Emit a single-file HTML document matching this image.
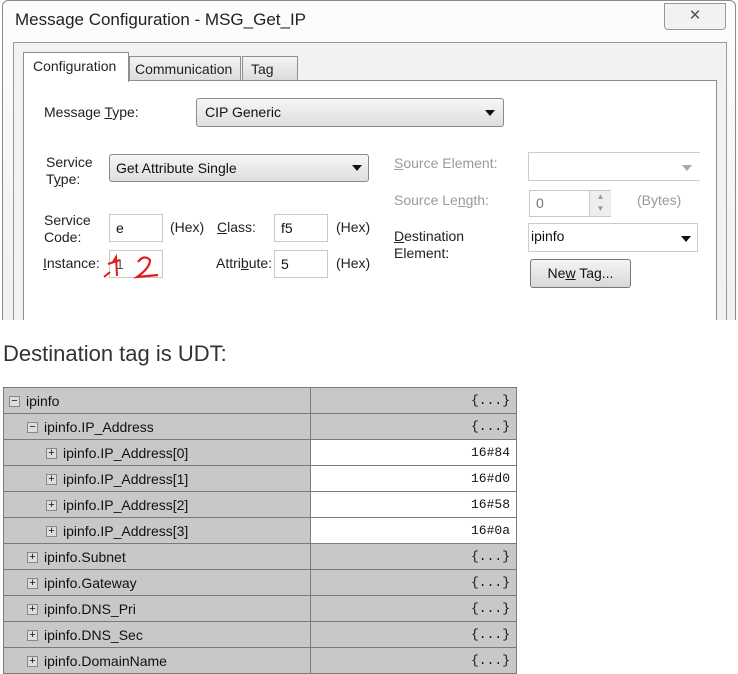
<!DOCTYPE html>
<html><head><style>
body{margin:0;width:738px;height:660px;background:#fff;position:relative;overflow:hidden;font-family:"Liberation Sans",sans-serif;}
.a{position:absolute;}
.t{position:absolute;font-size:14px;color:#222;white-space:nowrap;}
.g{color:#9a9a9a;}
.box{position:absolute;background:#fff;border:1px solid #c8c8c8;box-sizing:border-box;font-size:14px;padding-left:6px;color:#111;}
.combo{position:absolute;border:1px solid #8a8a8a;border-radius:3px;box-sizing:border-box;background:linear-gradient(#f6f6f6,#dedede);font-size:14px;padding-left:8px;color:#111;}
.arr{position:absolute;width:0;height:0;border-left:5px solid transparent;border-right:5px solid transparent;border-top:6px solid #111;}
u{text-decoration:underline;}
table{position:absolute;left:3px;top:387px;border-collapse:collapse;font-size:14px;color:#111;}
td{height:25px;border:1px solid #7a7a7a;background:#c8c8c8;padding:0;}
td.n{width:306px;}
td.v{width:206px;text-align:right;font-family:"Liberation Mono",monospace;font-size:13px;padding-right:6px;box-sizing:border-box;}
td.w{background:#fff;}
.pm{display:inline-block;width:9px;height:9px;border:1px solid #888;font-size:11px;line-height:8px;text-align:center;vertical-align:middle;margin-right:6px;background:#ddd;}
</style></head><body>
<!-- window frame -->
<div class="a" style="left:2px;top:0;width:734px;height:320px;border:1px solid #8a8a8a;border-bottom:none;border-radius:6px 6px 0 0;background:linear-gradient(#fdfdfd,#eef0f2);box-sizing:border-box;"></div>
<div class="t" style="left:15px;top:10px;font-size:17px;color:#222;">Message Configuration - MSG_Get_IP</div>
<div class="a" style="left:664px;top:3px;width:60px;height:25px;border:1px solid #999;border-radius:0 0 4px 4px;background:#f2f2f2;text-align:center;font-size:15px;color:#555;line-height:24px;">✕</div>
<div class="a" style="left:13px;top:42px;width:714px;height:278px;border:1px solid #9a9a9a;border-bottom:none;background:#f2f2f2;box-sizing:border-box;"></div>
<!-- tab panel -->
<div class="a" style="left:23px;top:80px;width:694px;height:240px;border:1px solid #8e8e8e;border-bottom:none;background:#fff;box-sizing:border-box;"></div>
<div class="a" style="left:129px;top:56px;width:112px;height:25px;border:1px solid #8e8e8e;background:linear-gradient(#f4f4f4,#dcdcdc);box-sizing:border-box;"></div>
<div class="a" style="left:242px;top:56px;width:56px;height:25px;border:1px solid #8e8e8e;background:linear-gradient(#f4f4f4,#dcdcdc);box-sizing:border-box;"></div>
<div class="a" style="left:23px;top:52px;width:106px;height:30px;border:1px solid #8e8e8e;border-bottom:none;background:#fff;box-sizing:border-box;"></div>
<div class="t" style="left:33px;top:58px;">Configuration</div>
<div class="t" style="left:135px;top:61px;">Communication</div>
<div class="t" style="left:251px;top:61px;">Tag</div>

<div class="t" style="left:44px;top:104px;">Message <u>T</u>ype:</div>
<div class="combo" style="left:196px;top:98px;width:308px;height:29px;line-height:27px;">CIP Generic<div class="arr" style="right:8px;top:11px;"></div></div>

<div class="t" style="left:46px;top:154px;line-height:17px;">Service<br>T<u>y</u>pe:</div>
<div class="combo" style="left:109px;top:154px;width:260px;height:28px;line-height:26px;padding-left:6px;">Get Attribute Single<div class="arr" style="right:6px;top:10px;"></div></div>

<div class="t" style="left:44px;top:212px;line-height:17px;">Service<br>Code:</div>
<div class="box" style="left:109px;top:214px;width:54px;height:28px;line-height:26px;">e</div>
<div class="t" style="left:170px;top:219px;">(Hex)</div>
<div class="t" style="left:217px;top:219px;"><u>C</u>lass:</div>
<div class="box" style="left:274px;top:214px;width:54px;height:28px;line-height:26px;">f5</div>
<div class="t" style="left:336px;top:219px;">(Hex)</div>

<div class="t" style="left:43px;top:255px;"><u>I</u>nstance:</div>
<div class="box" style="left:109px;top:250px;width:54px;height:28px;line-height:26px;color:#555;">1</div>
<svg class="a" style="left:100px;top:250px;" width="65" height="32"><path d="M4 27 L10 22 M13 12 L16 7 L17 26 M8 14 L20 10" stroke="#e31b1b" stroke-width="2" fill="none"/><path d="M38 12 Q44 4 50 10 Q50 18 37 27 L58 25" stroke="#e31b1b" stroke-width="2.2" fill="none"/></svg>
<div class="t" style="left:216px;top:255px;">Attri<u>b</u>ute:</div>
<div class="box" style="left:274px;top:250px;width:54px;height:28px;line-height:26px;">5</div>
<div class="t" style="left:336px;top:255px;">(Hex)</div>

<div class="t g" style="left:394px;top:155px;"><u>S</u>ource Element:</div>
<div class="a" style="left:528px;top:152px;width:172px;height:29px;border:1px solid #ccc;border-right:none;background:#fff;box-sizing:border-box;"><div class="arr" style="right:8px;top:12px;border-top-color:#aaa;"></div></div>
<div class="t g" style="left:394px;top:192px;">Source Le<u>n</u>gth:</div>
<div class="box" style="left:529px;top:190px;width:82px;height:27px;line-height:25px;color:#777;">0</div>
<div class="a" style="left:589px;top:191px;width:21px;height:25px;background:#eee;border-left:1px solid #ccc;font-size:8px;color:#999;text-align:center;line-height:12px;">▲<br>▼</div>
<div class="t g" style="left:637px;top:192px;">(Bytes)</div>

<div class="t" style="left:394px;top:228px;line-height:17px;"><u>D</u>estination<br>Element:</div>
<div class="a" style="left:528px;top:223px;width:170px;height:29px;border:1px solid #ccc;background:#fff;box-sizing:border-box;font-size:14px;padding-left:2px;line-height:24px;color:#111;">ipinfo<div class="arr" style="right:6px;top:12px;"></div></div>
<div class="a" style="left:530px;top:259px;width:101px;height:29px;border:1px solid #777;border-radius:3px;background:linear-gradient(#f4f4f4,#d8d8d8);box-sizing:border-box;font-size:14px;text-align:center;line-height:27px;color:#111;">Ne<u>w</u> Tag...</div>

<div class="a" style="left:0;top:320px;width:738px;height:67px;background:#fff;"></div>
<div class="t" style="left:3px;top:341px;font-size:22px;color:#333;">Destination tag is UDT:</div>

<table>
<tr><td class="n"><span style="margin-left:5px" class="pm">−</span>ipinfo</td><td class="v">{...}</td></tr>
<tr><td class="n"><span style="margin-left:23px" class="pm">−</span>ipinfo.IP_Address</td><td class="v">{...}</td></tr>
<tr><td class="n"><span style="margin-left:42px" class="pm">+</span>ipinfo.IP_Address[0]</td><td class="v w">16#84</td></tr>
<tr><td class="n"><span style="margin-left:42px" class="pm">+</span>ipinfo.IP_Address[1]</td><td class="v w">16#d0</td></tr>
<tr><td class="n"><span style="margin-left:42px" class="pm">+</span>ipinfo.IP_Address[2]</td><td class="v w">16#58</td></tr>
<tr><td class="n"><span style="margin-left:42px" class="pm">+</span>ipinfo.IP_Address[3]</td><td class="v w">16#0a</td></tr>
<tr><td class="n"><span style="margin-left:23px" class="pm">+</span>ipinfo.Subnet</td><td class="v">{...}</td></tr>
<tr><td class="n"><span style="margin-left:23px" class="pm">+</span>ipinfo.Gateway</td><td class="v">{...}</td></tr>
<tr><td class="n"><span style="margin-left:23px" class="pm">+</span>ipinfo.DNS_Pri</td><td class="v">{...}</td></tr>
<tr><td class="n"><span style="margin-left:23px" class="pm">+</span>ipinfo.DNS_Sec</td><td class="v">{...}</td></tr>
<tr><td class="n"><span style="margin-left:23px" class="pm">+</span>ipinfo.DomainName</td><td class="v">{...}</td></tr>
</table>
</body></html>
